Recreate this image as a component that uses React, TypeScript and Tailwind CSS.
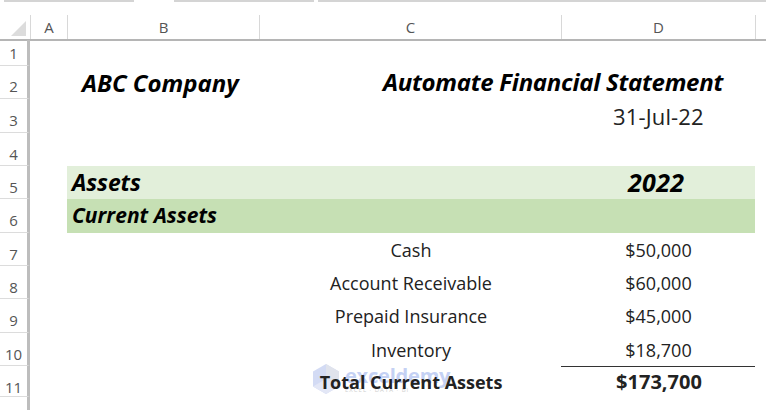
const FONT = "font-['Open_Sans','Liberation_Sans',sans-serif]";

const COLUMNS = [
  { label: "A", width: "w-[37px]" },
  { label: "B", width: "w-[192px]" },
  { label: "C", width: "w-[302px]" },
  { label: "D", width: "w-[194px]" },
];

const ROWS = [
  { n: 1, h: "h-[26px]", pad: "pt-[2px]" },
  { n: 2, h: "h-[33px]", pad: "pt-[9px]" },
  { n: 3, h: "h-[34px]", pad: "pt-[9px]" },
  { n: 4, h: "h-[33px]", pad: "pt-[10px]" },
  { n: 5, h: "h-[33px]", pad: "pt-[10px]" },
  { n: 6, h: "h-[34px]", pad: "pt-[10px]" },
  { n: 7, h: "h-[33px]", pad: "pt-[10px]" },
  { n: 8, h: "h-[33px]", pad: "pt-[10px]" },
  { n: 9, h: "h-[34px]", pad: "pt-[10px]" },
  { n: 10, h: "h-[33px]", pad: "pt-[10px]" },
  { n: 11, h: "h-[31px]", pad: "pt-[12px]" },
  { n: 12, h: "h-[33px]", pad: "pt-[8px]" },
];

const ITEMS: Record<number, [string, string]> = {
  7: ["Cash", "$50,000"],
  8: ["Account Receivable", "$60,000"],
  9: ["Prepaid Insurance", "$45,000"],
  10: ["Inventory", "$18,700"],
};

function RowContent({ n }: { n: number }) {
  if (n === 2) {
    return (
      <>
        <div className="w-[37px]" />
        <div className="w-[192px] pl-[15px] pt-[1px] text-[24px] font-bold italic text-black">ABC Company</div>
        <div className="relative w-[496px]">
          <span className="absolute left-[124px] top-[-19px] whitespace-nowrap text-[24px] font-bold italic tracking-[-0.28px] text-black">
            Automate Financial Statement
          </span>
        </div>
      </>
    );
  }
  if (n === 3) {
    return (
      <>
        <div className="w-[531px]" />
        <div className="w-[194px] pl-[52px] pt-[1px] text-[22px] tracking-[0.15px] text-[#222]">31-Jul-22</div>
      </>
    );
  }
  if (n === 5) {
    return (
      <>
        <div className="w-[37px]" />
        <div className="flex h-full w-[688px] items-center bg-[#e2efda]">
          <div className="w-[494px] pl-[5px] text-[23px] font-bold italic tracking-[-0.1px] text-black">Assets</div>
          <div className="w-[194px] pl-[67px] pt-[1px] text-[25px] font-bold italic tracking-[0.3px] text-black">2022</div>
        </div>
      </>
    );
  }
  if (n === 6) {
    return (
      <>
        <div className="w-[37px]" />
        <div className="flex h-full w-[688px] items-center bg-[#c6e0b4] pl-[5px] text-[21px] font-bold italic text-black">
          Current Assets
        </div>
      </>
    );
  }
  if (ITEMS[n]) {
    return (
      <>
        <div className="w-[229px]" />
        <div className="w-[302px] pl-[2px] pt-[1px] text-center text-[18px] text-[#222]">{ITEMS[n][0]}</div>
        <div className="w-[194px] pl-[1px] pt-[1px] text-center text-[18px] text-[#222]">{ITEMS[n][1]}</div>
      </>
    );
  }
  if (n === 11) {
    return (
      <>
        <div className="w-[229px]" />
        <div className="w-[302px] pl-[2px] pt-[1px] text-center text-[18px] font-bold text-[#222]">Total Current Assets</div>
        <div className="flex h-full w-[194px] items-center justify-center border-t border-[#333] pl-[2px] text-[20px] font-bold text-[#222]">
          $173,700
        </div>
      </>
    );
  }
  return null;
}

export default function App() {
  return (
    <div className={`${FONT} relative h-[410px] w-[766px] overflow-hidden bg-white`}>
      {/* sheet tabs cut off at the top */}
      <div className="flex h-[15px] items-start">
        <div className="ml-[4px] h-[2px] w-[130px] bg-[#d4d4d4]" />
        <div className="ml-[40px] h-[2px] w-[140px] bg-[#d4d4d4]" />
        <div className="ml-[4px] h-[2px] w-[448px] bg-[#d4d4d4]" />
      </div>

      {/* column headers */}
      <div className="flex h-[26px] border-b-2 border-[#b5b5b5]">
        <div className="flex w-[31px] items-end justify-end border-r border-[#d8d8d8] pb-[3px] pr-[4px]">
          <div className="h-0 w-0 border-b-[15px] border-l-[15px] border-b-[#dcdcdc] border-l-transparent" />
        </div>
        {COLUMNS.map((c) => (
          <div key={c.label} className={`${c.width} flex items-center justify-center border-r border-[#d8d8d8] text-[15px] text-[#555]`}>
            {c.label}
          </div>
        ))}
      </div>

      {/* watermark */}
      <div className="pointer-events-none absolute left-[312px] top-[363px] flex items-center gap-[5px] opacity-80">
        <svg width="28" height="32" viewBox="0 0 28 32">
          <path d="M14 1 L27 8.5 V23.5 L14 31 L1 23.5 V8.5 Z" fill="#c9d3f2" />
          <path d="M14 1 L27 8.5 V23.5 L14 16 Z" fill="#d9dde8" />
          <path d="M1 23.5 L14 16 L27 23.5 L14 31 Z" fill="#dde2f5" />
        </svg>
        <div className="flex flex-col leading-none">
          <span className="text-[20px] font-bold tracking-[-0.2px] text-[#b6c6f2]">exceldemy</span>
          <span className="mt-[1px] text-[6px] tracking-[1px] text-[#c4c4c4]">EXCEL · DATA · BI</span>
        </div>
      </div>

      <div className="relative mt-[-1px]">
        {ROWS.map((r) => (
          <div key={r.n} className={`${r.h} flex items-center`}>
            <div className={`${r.pad} flex h-full w-[30px] shrink-0 items-center justify-center border-b border-r-[3px] border-b-[#dcdcdc] border-r-[#bdbdbd] text-[15px] text-[#555]`}>
              {r.n}
            </div>
            <RowContent n={r.n} />
          </div>
        ))}
      </div>
    </div>
  );
}
